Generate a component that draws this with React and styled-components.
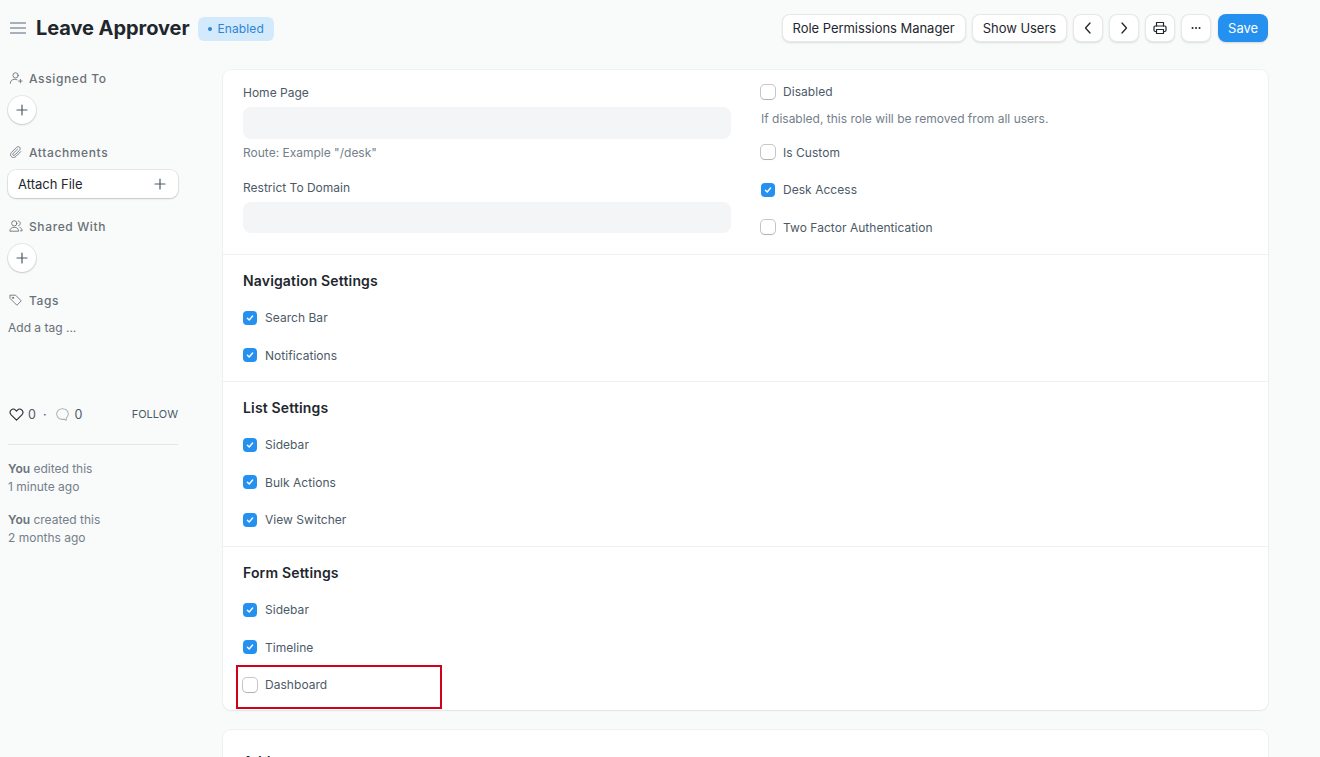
import React from 'react';
import styled, { createGlobalStyle } from 'styled-components';

const GlobalStyle = createGlobalStyle`
  html, body {
    margin: 0;
    padding: 0;
    height: 100%;
    overflow: hidden;
    background: #f9fafa;
    font-family: Inter, "Liberation Sans", sans-serif;
    font-size: 13px;
    color: #1f272e;
  }
  * { box-sizing: border-box; }
`;

const Page = styled.div`
  width: 1320px;
  height: 757px;
  overflow: hidden;
  position: relative;
`;

// header
const Header = styled.header`
  display: flex;
  align-items: center;
  height: 56px;
  padding: 0 52px 1px 10px;
`;
const TitleGroup = styled.div`
  display: flex;
  align-items: center;
  flex: 1;
`;
const Title = styled.h1`
  margin: 0 8px 0 10px;
  font-size: 20px;
  line-height: 28px;
  font-weight: 700;
  letter-spacing: -0.06px;
  color: #1f272e;
`;
const Badge = styled.span`
  display: inline-flex;
  align-items: center;
  gap: 6px;
  height: 24px;
  margin-top: 2px;
  padding: 0 10px;
  border-radius: 6px;
  background: #d3e9fc;
  color: #2d85d6;
  font-size: 12px;
  letter-spacing: 0.1px;
  &::before {
    content: '';
    width: 4px;
    height: 4px;
    border-radius: 50%;
    background: #2d85d6;
  }
`;
const Actions = styled.div`
  display: flex;
  align-items: center;
  gap: 6px;
`;
const Button = styled.button`
  display: flex;
  align-items: center;
  justify-content: center;
  height: 28px;
  width: ${(p) => p.$width || 'auto'};
  padding: ${(p) => (p.$width ? '0' : '0 11px')};
  border: none;
  border-radius: 8px;
  background: #fff;
  color: #1f272e;
  font-family: inherit;
  font-size: 13px;
  letter-spacing: -0.04px;
  box-shadow: inset 0 0 0 1px rgba(0, 0, 0, 0.09), 0 1px 2px rgba(0, 0, 0, 0.12);
`;
const SaveButton = styled(Button)`
  margin-left: 1px;
  background: #2490ef;
  color: #fff;
  padding: 0 10px;
  box-shadow: 0 1px 2px rgba(0, 0, 0, 0.15);
`;

// layout
const Body = styled.div`
  display: grid;
  grid-template-columns: 170px 1045px;
  column-gap: 45px;
  padding-left: 8px;
  align-items: start;
`;

// sidebar
const Sidebar = styled.aside`
  display: flex;
  flex-direction: column;
  padding-top: 13px;
`;
const SideSection = styled.section`
  height: ${(p) => p.$height || '74px'};
`;
const SideLabel = styled.div`
  display: flex;
  align-items: center;
  gap: 6px;
  height: 18px;
  padding-left: 1px;
  margin-bottom: 9px;
  color: #687178;
  font-size: 12px;
  font-weight: 500;
  letter-spacing: 0.62px;
  svg { flex: none; }
`;
const CircleButton = styled.button`
  display: flex;
  align-items: center;
  justify-content: center;
  width: 28px;
  height: 28px;
  padding: 0;
  border: none;
  border-radius: 50%;
  background: #fff;
  box-shadow: 0 0 0 1px rgba(0, 0, 0, 0.07), 0 1px 2px rgba(0, 0, 0, 0.15);
`;
const AttachButton = styled.button`
  display: flex;
  align-items: center;
  justify-content: space-between;
  width: 170px;
  height: 28px;
  padding: 0 10px 1px 10px;
  border: none;
  border-radius: 8px;
  background: #fff;
  color: #1f272e;
  font-family: inherit;
  font-size: 13px;
  box-shadow: 0 0 0 1px rgba(0, 0, 0, 0.07), 0 1px 2px rgba(0, 0, 0, 0.15);
`;
const TagHint = styled.div`
  color: #687178;
  font-size: 12px;
  line-height: 18px;
  padding-top: 1px;
`;
const Stats = styled.div`
  display: flex;
  align-items: center;
  height: 18px;
  margin-top: 68px;
  color: #4c5a67;
  font-size: 12.5px;
  padding-left: 1px;
`;
const StatItem = styled.span`
  display: flex;
  align-items: center;
  gap: ${(p) => p.$gap || '4px'};
`;
const Dot = styled.span`
  margin: 0 8px 0 7px;
`;
const Follow = styled.span`
  margin-left: auto;
  font-size: 11px;
  color: #4c5a67;
`;
const Divider = styled.hr`
  width: 100%;
  margin: 21px 0 15px;
  border: none;
  border-top: 1px solid #e2e6e9;
`;
const Activity = styled.p`
  margin: 0 0 15px;
  color: #74808b;
  font-size: 12px;
  line-height: 18px;
  b { font-weight: 600; color: #687178; }
`;

// form
const Main = styled.main`
  display: flex;
  flex-direction: column;
  gap: 20px;
  margin-top: 14px;
`;
const Card = styled.div`
  border-radius: 8px;
  background: #fff;
  box-shadow: 0 0 0 1px rgba(0, 0, 0, 0.035), 0 1px 2px rgba(0, 0, 0, 0.05);
`;
const Section = styled.section`
  padding: 0 20px;
  height: ${(p) => p.$height};
  border-top: ${(p) => (p.$first ? 'none' : '1px solid #eef0f2')};
`;
const Columns = styled.div`
  display: grid;
  grid-template-columns: 488px 1fr;
  column-gap: 30px;
`;
const LeftColumn = styled.div`
  padding-top: 14px;
`;
const RightColumn = styled.div`
  padding-top: 3px;
`;
const FieldLabel = styled.div`
  height: 18px;
  margin-top: ${(p) => p.$top || '0'};
  margin-bottom: 5px;
  line-height: 18px;
  font-size: 12px;
  color: #4c5a67;
`;
const Input = styled.div`
  height: ${(p) => p.$height || '32px'};
  border-radius: 8px;
  background: #f4f5f6;
`;
const Help = styled.div`
  font-size: 12px;
  line-height: 18px;
  color: #74808b;
  margin-top: ${(p) => p.$top || '5px'};
  margin-bottom: ${(p) => p.$bottom || '0'};
`;
const SectionTitle = styled.h4`
  margin: 0;
  padding-top: 16px;
  height: 44px;
  font-size: 14px;
  line-height: 20px;
  font-weight: 600;
  letter-spacing: 0.16px;
  color: #1f272e;
`;
const CheckRow = styled.label`
  display: flex;
  align-items: center;
  gap: 8px;
  height: 37.5px;
  font-size: 12px;
  letter-spacing: 0.04px;
  color: #4c5a67;
`;
const Box = styled.span`
  display: flex;
  align-items: center;
  justify-content: center;
  flex: none;
  width: 14px;
  height: 14px;
  border-radius: 4px;
  background: ${(p) => (p.$on ? '#2490ef' : '#fff')};
  box-shadow: ${(p) =>
    p.$on
      ? 'none'
      : '0 0 0 1px rgba(0, 0, 0, 0.22), 0 1px 1px rgba(0, 0, 0, 0.12)'};
`;
const Highlight = styled.div`
  position: absolute;
  left: 236px;
  top: 665px;
  width: 206px;
  height: 44px;
  border: 2px solid #d0021b;
  pointer-events: none;
`;
const CutOffTitle = styled.h4`
  margin: 0;
  padding: 22px 20px 0;
  font-size: 14px;
  line-height: 20px;
  font-weight: 600;
`;

const Icon = ({ size = 16, color = '#4c5a67', width = 1, children }) => (
  <svg
    width={size}
    height={size}
    viewBox="0 0 16 16"
    fill="none"
    stroke={color}
    strokeWidth={width}
    strokeLinecap="round"
    strokeLinejoin="round"
  >
    {children}
  </svg>
);

const Plus = () => (
  <Icon size={16} color="#4c5a67" width={1.2}>
    <path d="M8 3v10M3 8h10" />
  </Icon>
);

const Check = ({ label, on }) => (
  <CheckRow>
    <Box $on={on}>
      {on && (
        <svg width="10" height="10" viewBox="0 0 10 10" fill="none">
          <path
            d="M2.4 5.3 4.2 7l3.4-4"
            stroke="#fff"
            strokeWidth="1.4"
            strokeLinecap="round"
            strokeLinejoin="round"
          />
        </svg>
      )}
    </Box>
    {label}
  </CheckRow>
);

const App = () => {
  return (
    <Page>
      <GlobalStyle />
      <Header>
        <TitleGroup>
          <Icon size={16} color="#8d99a6" width={1.3}>
            <path d="M0.5 3h15M0.5 8h15M0.5 13h15" />
          </Icon>
          <Title>Leave Approver</Title>
          <Badge>Enabled</Badge>
        </TitleGroup>
        <Actions>
          <Button>Role Permissions Manager</Button>
          <Button>Show Users</Button>
          <Button $width="30px">
            <Icon color="#1f272e" width={1.3}>
              <path d="M10 3 5.500 8l4.500 5" />
            </Icon>
          </Button>
          <Button $width="30px">
            <Icon color="#1f272e" width={1.3}>
              <path d="M6 3l4.500 5L6 13" />
            </Icon>
          </Button>
          <Button $width="30px">
            <Icon color="#1f272e" width={1.2}>
              <path d="M4.500 6V2.500h7V6" />
              <rect x="2" y="6" width="12" height="5.500" rx="1.200" />
              <rect x="4.500" y="9.500" width="7" height="4" fill="#fff" />
            </Icon>
          </Button>
          <Button $width="30px">
            <Icon color="#1f272e" width={1.9}>
              <path d="M4.500 8h.1M8 8h.1M11.500 8h.1" />
            </Icon>
          </Button>
          <SaveButton>Save</SaveButton>
        </Actions>
      </Header>

      <Body>
        <Sidebar>
          <SideSection>
            <SideLabel>
              <Icon size={14} color="#687178">
                <circle cx="7.500" cy="5" r="3" />
                <path d="M1.500 14c0-2.800 2-4.500 5-4.500 1 0 1.800.2 2.500.5M11 11.500h4M13 9.500v4" />
              </Icon>
              Assigned To
            </SideLabel>
            <CircleButton>
              <Plus />
            </CircleButton>
          </SideSection>
          <SideSection>
            <SideLabel>
              <Icon size={14} color="#687178">
                <path d="M13.500 7.500 8 13c-1.700 1.700-4 1.700-5.300.300C1.400 12 1.500 9.800 3 8.300L8.500 2.800c1.100-1.100 2.700-1.100 3.600-.200 1 1 .9 2.500-.1 3.500L6.500 11.500c-.6.600-1.400.6-1.900.100-.5-.5-.5-1.300.1-1.900L9.800 4.700" />
              </Icon>
              Attachments
            </SideLabel>
            <AttachButton>
              Attach File
              <Plus />
            </AttachButton>
          </SideSection>
          <SideSection>
            <SideLabel>
              <Icon size={14} color="#687178">
                <circle cx="6" cy="5" r="3" />
                <path d="M1 13.500c0-2.500 2-4 5-4s5 1.500 5 4zM10.500 2.300c1.500.3 2.400 1.400 2.400 2.700s-.8 2.300-2 2.700M12.500 9.700c1.500.5 2.500 1.800 2.500 3.800h-2" />
              </Icon>
              Shared With
            </SideLabel>
            <CircleButton>
              <Plus />
            </CircleButton>
          </SideSection>
          <SideSection $height="auto">
            <SideLabel>
              <Icon size={14} color="#687178">
                <path d="M1.500 2.500h6l6.500 6.500-5 5-7.500-7.500z" />
                <circle cx="4.500" cy="5.500" r=".8" />
              </Icon>
              Tags
            </SideLabel>
            <TagHint>Add a tag ...</TagHint>
          </SideSection>
          <Stats>
            <StatItem>
              <Icon size={15} color="#1f272e" width={1.1}>
                <path d="M8 14 2.300 8.300C.9 6.800.9 4.600 2.200 3.300c1.400-1.300 3.500-1.200 4.800.1L8 4.500l1-1.100c1.300-1.300 3.400-1.400 4.800-.1 1.300 1.300 1.300 3.500-.1 5z" />
              </Icon>
              0
            </StatItem>
            <Dot>·</Dot>
            <StatItem $gap="5px">
              <Icon size={15} color="#a6b1b9" width={1.1}>
                <path d="M8 1.800c3.500 0 6.200 2.500 6.200 5.700 0 1.800-.8 3.200-2.200 4.300v2.400L9.700 13c-.5.100-1.100.2-1.700.2-3.500 0-6.200-2.500-6.200-5.700S4.500 1.800 8 1.800z" />
              </Icon>
              0
            </StatItem>
            <Follow>FOLLOW</Follow>
          </Stats>
          <Divider />
          <Activity>
            <b>You</b> edited this
            <br />1 minute ago
          </Activity>
          <Activity>
            <b>You</b> created this
            <br />2 months ago
          </Activity>
        </Sidebar>

        <Main>
          <Card>
            <Section $first $height="184px">
              <Columns>
                <LeftColumn>
                  <FieldLabel>Home Page</FieldLabel>
                  <Input />
                  <Help>Route: Example "/desk"</Help>
                  <FieldLabel $top="17px">Restrict To Domain</FieldLabel>
                  <Input $height="31px" />
                </LeftColumn>
                <RightColumn>
                  <Check label="Disabled" />
                  <Help $top="-1px" $bottom="6px">If disabled, this role will be removed from all users.</Help>
                  <Check label="Is Custom" />
                  <Check label="Desk Access" on />
                  <Check label="Two Factor Authentication" />
                </RightColumn>
              </Columns>
            </Section>
            <Section $height="127px">
              <SectionTitle>Navigation Settings</SectionTitle>
              <Check label="Search Bar" on />
              <Check label="Notifications" on />
            </Section>
            <Section $height="165px">
              <SectionTitle>List Settings</SectionTitle>
              <Check label="Sidebar" on />
              <Check label="Bulk Actions" on />
              <Check label="View Switcher" on />
            </Section>
            <Section $height="164px">
              <SectionTitle>Form Settings</SectionTitle>
              <Check label="Sidebar" on />
              <Check label="Timeline" on />
              <Check label="Dashboard" />
            </Section>
          </Card>
          <Card>
            <CutOffTitle>Address</CutOffTitle>
          </Card>
        </Main>
      </Body>
      <Highlight />
    </Page>
  );
};

export default App;
